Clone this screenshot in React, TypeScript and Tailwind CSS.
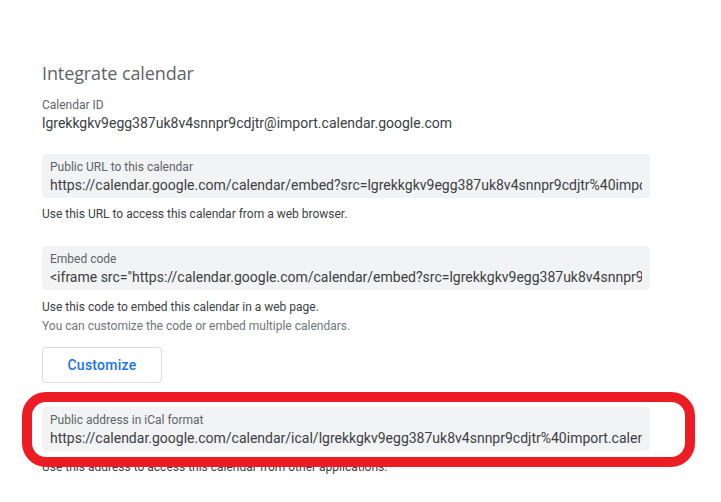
export default function App() {
  const calendarId = 'lgrekkgkv9egg387uk8v4snnpr9cdjtr'

  return (
    <div className="min-h-screen bg-white font-['Roboto',sans-serif] text-[#3c4043]">
      <div className="w-[608px] ml-[42px] pt-[61px]">
        <h2 className="text-[18px] leading-6 text-[#5f6368] font-['Open_Sans',sans-serif] tracking-[-0.1px]">
          Integrate calendar
        </h2>

        {/* Calendar ID */}
        <div className="mt-[12px]">
          <div className="text-[12px] leading-4 text-[#5f6368]">Calendar ID</div>
          <div className="text-[14px] leading-5 text-[#3c4043]">{calendarId}@import.calendar.google.com</div>
        </div>

        {/* Public URL */}
        <div className="mt-[21px] h-[44px] rounded bg-[#f1f3f4] px-2 pt-[5px] overflow-hidden">
          <div className="text-[12px] leading-4 text-[#5f6368]">Public URL to this calendar</div>
          <div className="text-[14px] leading-5 text-[#3c4043] whitespace-nowrap overflow-hidden">
            https://calendar.google.com/calendar/embed?src={calendarId}%40import.calendar.google.com&amp;ctz=Europe%2FLondon
          </div>
        </div>
        <p className="mt-[6px] text-[12px] leading-5">Use this URL to access this calendar from a web browser.</p>

        {/* Embed code */}
        <div className="mt-[22px] h-[44px] rounded bg-[#f1f3f4] px-2 pt-[5px] overflow-hidden">
          <div className="text-[12px] leading-4 text-[#5f6368]">Embed code</div>
          <div className="text-[14px] leading-5 text-[#3c4043] whitespace-nowrap overflow-hidden">
            &lt;iframe src="https://calendar.google.com/calendar/embed?src={calendarId}%40import.calendar.google.com" style="border: 0"
          </div>
        </div>
        <p className="mt-[7px] text-[12px] leading-5">Use this code to embed this calendar in a web page.</p>
        <p className="text-[12px] leading-5 text-[#70757a] -mt-[1px]">You can customize the code or embed multiple calendars.</p>

        <button className="mt-[11px] h-[36px] w-[120px] rounded border border-[#dadce0] bg-white text-[14px] font-medium text-[#1a73e8] tracking-[0.25px]">
          Customize
        </button>

        {/* iCal address */}
        <div className="relative mt-[24px]">
          <div className="h-[44px] rounded bg-[#f1f3f4] px-2 pt-[5px] overflow-hidden">
            <div className="text-[12px] leading-4 text-[#5f6368]">Public address in iCal format</div>
            <div className="text-[14px] leading-5 text-[#3c4043] whitespace-nowrap overflow-hidden">
              https://calendar.google.com/calendar/ical/{calendarId}%40import.calendar.google.com/public/basic.ics
            </div>
          </div>
          <p className="mt-[6px] text-[12px] leading-5">Use this address to access this calendar from other applications.</p>
          {/* highlight annotation */}
          <div className="absolute left-[-20px] top-[-15px] w-[673px] h-[75px] rounded-[24px] border-[10px] border-[#ed1c24] pointer-events-none" />
        </div>
      </div>
    </div>
  )
}
